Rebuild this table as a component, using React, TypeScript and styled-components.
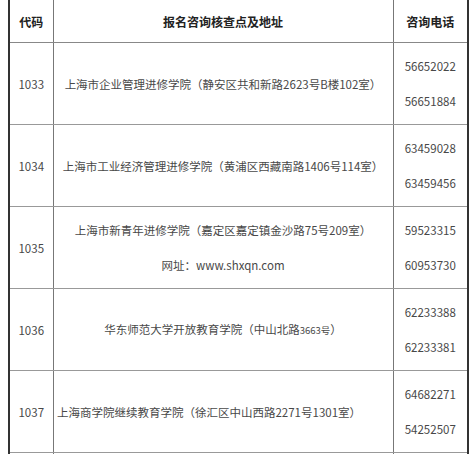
import React from 'react';
import styled, {createGlobalStyle} from "styled-components";

const GlobalStyle = createGlobalStyle`
    html, body {
        margin: 0;
        background: #fff;
        overflow: hidden;
    }

    body {
        font-family: "Noto Sans CJK SC", "Noto Sans", sans-serif;
    }
`

const Table = styled.table`
    margin-left: 8px;
    width: 461px;
    table-layout: fixed;
    border-collapse: collapse;
    border-left: 2px solid #333;
    border-right: 2px solid #333;
    color: #484848;
    font-size: 11.5px;
`

const Head = styled.th`
    height: 42px;
    padding: 0;
    font-weight: 700;
    font-size: 12px;
    color: #222;
    border-right: 1px solid #777;
    border-bottom: 1px solid #888;
    text-align: center;
`

const Row = styled.tr`
    height: 82px;
`

const Cell = styled.td<{ $shift?: number }>`
    padding: 0 ${p => p.$shift ?? 0}px 0 0;
    border-right: 1px solid #777;
    border-bottom: 1px solid #999;
    text-align: center;
    vertical-align: middle;
    white-space: nowrap;
`

const Lines = styled.div`
    display: flex;
    flex-direction: column;
    align-items: center;
    row-gap: 17px;
    line-height: 18px;
`

const Small = styled.span`
    font-size: 9.5px;
`

type Entry = {
    code: string
    lines: React.ReactNode[]
    phones: string[]
    shift?: number
}

const entries: Entry[] = [
    {
        code: "1033",
        lines: ["上海市企业管理进修学院（静安区共和新路2623号B楼102室）"],
        phones: ["56652022", "56651884"]
    },
    {
        code: "1034",
        lines: ["上海市工业经济管理进修学院（黄浦区西藏南路1406号114室）"],
        phones: ["63459028", "63459456"]
    },
    {
        code: "1035",
        lines: ["上海市新青年进修学院（嘉定区嘉定镇金沙路75号209室）", "网址：www.shxqn.com"],
        phones: ["59523315", "60953730"]
    },
    {
        code: "1036",
        lines: [<>华东师范大学开放教育学院（中山北路<Small>3663号</Small>）</>],
        phones: ["62233388", "62233381"]
    },
    {
        code: "1037",
        lines: ["上海商学院继续教育学院（徐汇区中山西路2271号1301室）"],
        phones: ["64682271", "54252507"],
        shift: 28
    }
]

export default function App() {
    return (
        <>
            <GlobalStyle/>
            <Table>
                <colgroup>
                    <col style={{width: 44}}/>
                    <col style={{width: 340}}/>
                    <col/>
                </colgroup>
                <thead>
                <tr>
                    <Head>代码</Head>
                    <Head>报名咨询核查点及地址</Head>
                    <Head>咨询电话</Head>
                </tr>
                </thead>
                <tbody>
                {entries.map((e) => (
                    <Row key={e.code}>
                        <Cell>{e.code}</Cell>
                        <Cell $shift={e.shift}>
                            <Lines>
                                {e.lines.map((l, i) => <span key={i}>{l}</span>)}
                            </Lines>
                        </Cell>
                        <Cell>
                            <Lines>
                                {e.phones.map((p) => <span key={p}>{p}</span>)}
                            </Lines>
                        </Cell>
                    </Row>
                ))}
                <Row>
                    <Cell/>
                    <Cell/>
                    <Cell/>
                </Row>
                </tbody>
            </Table>
        </>
    );
}
